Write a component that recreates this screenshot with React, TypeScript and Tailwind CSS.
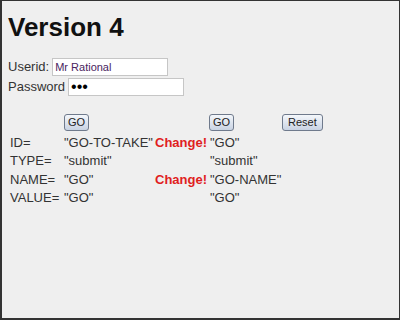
import React from "react";

const btn =
  "h-[17px] px-[3px] text-[11px] leading-none text-[#222] rounded-[3px] border border-[#6f7a8c] bg-gradient-to-b from-[#f4f7fb] to-[#c9d3e3]";

const rows = [
  { label: "ID=", left: '"GO-TO-TAKE"', change: true, right: '"GO"' },
  { label: "TYPE=", left: '"submit"', change: false, right: '"submit"' },
  { label: "NAME=", left: '"GO"', change: true, right: '"GO-NAME"' },
  { label: "VALUE=", left: '"GO"', change: false, right: '"GO"' },
];

export default function App() {
  return (
    <div
      className="w-[400px] h-[320px] bg-[#efefef] border border-l-2 border-b-2 border-[#333] text-[#333]"
      style={{ fontFamily: '"Liberation Sans", Arial, sans-serif' }}
    >
      <div className="pl-[6px]">
        <h1 className="mt-[13px] h-[26px] text-[26px] leading-[26px] font-bold text-[#111]">
          Version 4
        </h1>

        <div className="mt-[17px] flex flex-col text-[13px]">
          <div className="flex items-center h-[20px] gap-[3px]">
            <span>Userid:</span>
            <input
              readOnly
              value="Mr Rational"
              className="w-[116px] h-[18px] px-[2px] text-[11px] text-[#4a2460] bg-white border border-[#c6c6c6] outline-none"
            />
          </div>
          <div className="flex items-center h-[20px] gap-[3px]">
            <span>Password</span>
            <input
              readOnly
              type="password"
              value="abc"
              className="w-[116px] h-[18px] px-[2px] text-[16px] leading-none text-black bg-white border border-[#c6c6c6] outline-none"
            />
          </div>
        </div>
      </div>

      <div className="pl-[8px] mt-[17px] grid grid-cols-[54px_91px_54px_73px_auto] text-[13px]">
        <div />
        <div className="h-[20px] flex items-start">
          <button className={btn}>GO</button>
        </div>
        <div />
        <div className="flex items-start">
          <button className={btn}>GO</button>
        </div>
        <div className="flex items-start">
          <button className={btn + " px-[5px]"}>Reset</button>
        </div>

        {rows.map((r) => (
          <React.Fragment key={r.label}>
            <div className="leading-[18.4px] whitespace-nowrap">{r.label}</div>
            <div className="leading-[18.4px] whitespace-nowrap">{r.left}</div>
            <div className="leading-[18.4px] font-bold text-[#e01e1e]">
              {r.change ? "Change!" : ""}
            </div>
            <div className="leading-[18.4px] whitespace-nowrap col-span-2 pl-[1px]">{r.right}</div>
          </React.Fragment>
        ))}
      </div>
    </div>
  );
}
